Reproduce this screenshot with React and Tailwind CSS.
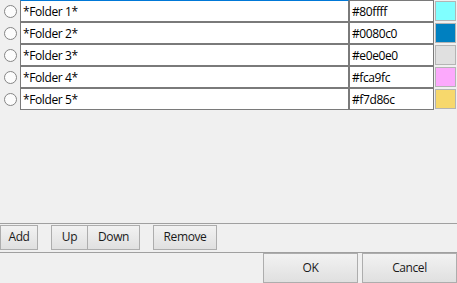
const folders = [
  { name: '*Folder 1*', hex: '#80ffff', color: '#80ffff' },
  { name: '*Folder 2*', hex: '#0080c0', color: '#0080c0' },
  { name: '*Folder 3*', hex: '#e0e0e0', color: '#e0e0e0' },
  { name: '*Folder 4*', hex: '#fca9fc', color: '#fca9fc' },
  { name: '*Folder 5*', hex: '#f7d86c', color: '#f7d86c' },
];

const btn =
  'h-full border border-[#adadad] bg-gradient-to-b from-[#f2f2f2] to-[#e0e0e0] text-[12px] tracking-[-0.4px] text-[#1a1a1a] leading-none flex items-center justify-center';

function Row({ folder, first }) {
  return (
    <div className="flex h-[22px] items-stretch">
      <div className="w-[20px] flex items-center justify-center">
        <div className="w-[13px] h-[13px] rounded-full border border-[#858585] bg-[#fcfcfc]" />
      </div>
      <div
        className={
          'w-[329px] border border-[#7a7a7a] bg-white flex items-center pl-[2px] pt-[1px] ' +
          (first ? 'border-t-[#0078d7]' : '')
        }
      >
        <span className="text-[12px] tracking-[-0.4px]">{folder.name}</span>
      </div>
      <div className="w-[85px] border border-[#7a7a7a] bg-white flex items-center pl-[2px] pt-[1px]">
        <span className="text-[12px] tracking-[-0.4px]">{folder.hex}</span>
      </div>
      <div className="pl-[1px] py-[1px]">
        <div
          className="w-[21px] h-full border border-[#b4b4b4]"
          style={{ backgroundColor: folder.color }}
        />
      </div>
    </div>
  );
}

export default function App() {
  return (
    <div
      className="w-[457px] h-[283px] overflow-hidden bg-[#f0f0f0] flex flex-col text-black"
      style={{ fontFamily: '"Open Sans", "Noto Sans", sans-serif' }}
    >
      <div className="h-[229px] border-b border-[#a0a0a0]">
        {folders.map((f, i) => (
          <Row key={f.name} folder={f} first={i === 0} />
        ))}
      </div>
      <div className="h-[30px] flex items-start pt-[1px] border-b border-[#a0a0a0]">
        <div className="h-[25px] flex">
          <button className={btn + ' w-[38px]'}>Add</button>
          <div className="w-[13px]" />
          <button className={btn + ' w-[37px]'}>Up</button>
          <button className={btn + ' w-[52px] border-l-0'}>Down</button>
          <div className="w-[13px]" />
          <button className={btn + ' w-[64px]'}>Remove</button>
        </div>
      </div>
      <div className="flex-1 flex justify-end">
        <div className="flex gap-[4px] h-[30px]">
          <button className={btn + ' w-[95px]'}>OK</button>
          <button className={btn + ' w-[95px]'}>Cancel</button>
        </div>
      </div>
    </div>
  );
}
